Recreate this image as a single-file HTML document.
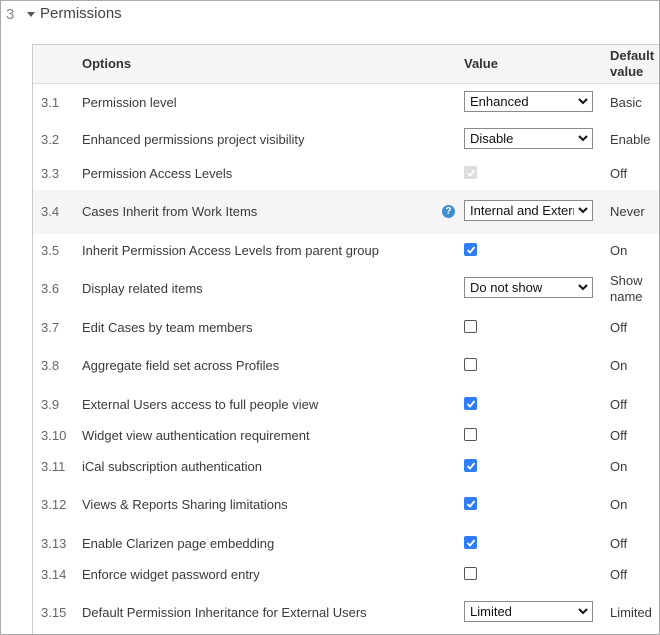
<!DOCTYPE html><html><head><style>
html,body{margin:0;height:635px;overflow:hidden}
body{width:660px;font-family:"Liberation Sans",sans-serif;font-size:13px;color:#3a3a3a;background:#fff;position:relative}
.frame{position:absolute;left:0;top:0;width:658px;height:633px;border:1px solid #aaa;z-index:5;pointer-events:none}
.t{position:absolute;left:32px;top:44px;width:627px;height:590px;border-left:1px solid #ccc;border-top:1px solid #ccc}
.hd{position:absolute;left:33px;top:45px;width:626px;height:38px;background:#f5f5f5;border-bottom:1px solid #ddd}
.a{position:absolute;white-space:nowrap}
.n{color:#666;left:41px}
.o{left:82px}
.d{left:610px}
.sel{position:absolute;left:464px;width:127px;height:19px;border:1px solid #8a8a8a;background:#fff;box-sizing:content-box}
.sel span{position:absolute;left:5px;top:2px;color:#111;white-space:nowrap;overflow:hidden;width:104px}
.sel svg{position:absolute;right:4px;top:6px}
.cb{position:absolute;left:464px;width:11px;height:11px;border:1px solid #555;border-radius:2px;background:#fff}
.cb.on{background:#2f7cf6;border-color:#2f7cf6}
.cb.dis{background:#ddd;border-color:#ddd}
.cb svg{position:absolute;left:1px;top:1px}
</style></head><body>
<div class="frame"></div>
<div class="a" style="left:6px;top:6px;font-size:15px;color:#888">3</div>
<svg class="a" style="left:27px;top:12px" width="8" height="5"><path d="M0 0H8L4 5Z" fill="#555"/></svg>
<div class="a" style="left:40px;top:5px;font-size:15px;color:#444">Permissions</div>
<div class="t"></div><div class="hd"></div>
<div class="a" style="left:33px;top:190px;width:626px;height:44px;background:#f5f5f5"></div>
<div class="a" style="left:82px;top:56px;font-weight:bold;color:#333">Options</div>
<div class="a" style="left:464px;top:56px;font-weight:bold;color:#333">Value</div>
<div class="a" style="left:610px;top:48px;font-weight:bold;color:#333;line-height:16px">Default<br>value</div>

<div class="a n" style="top:95px">3.1</div><div class="a o" style="top:95px">Permission level</div>
<div class="sel" style="top:91px"><span>Enhanced</span><svg width="10" height="7"><path d="M1 1L5 5L9 1" stroke="#111" stroke-width="2" fill="none"/></svg></div>
<div class="a d" style="top:95px">Basic</div>

<div class="a n" style="top:132px">3.2</div><div class="a o" style="top:132px">Enhanced permissions project visibility</div>
<div class="sel" style="top:128px"><span>Disable</span><svg width="10" height="7"><path d="M1 1L5 5L9 1" stroke="#111" stroke-width="2" fill="none"/></svg></div>
<div class="a d" style="top:132px">Enable</div>

<div class="a n" style="top:166px">3.3</div><div class="a o" style="top:166px">Permission Access Levels</div>
<div class="cb dis" style="top:166px"><svg width="10" height="10"><path d="M1.5 5L4 7.5L8.5 2" stroke="#fff" stroke-width="1.8" fill="none"/></svg></div>
<div class="a d" style="top:166px">Off</div>

<div class="a n" style="top:204px">3.4</div><div class="a o" style="top:204px">Cases Inherit from Work Items</div>
<div class="a" style="left:442px;top:205px;width:13px;height:13px;border-radius:50%;background:#3d8fd1;color:#fff;font-size:10px;font-weight:bold;text-align:center;line-height:13px">?</div>
<div class="sel" style="top:200px"><span>Internal and Extern</span><svg width="10" height="7"><path d="M1 1L5 5L9 1" stroke="#111" stroke-width="2" fill="none"/></svg></div>
<div class="a d" style="top:204px">Never</div>

<div class="a n" style="top:243px">3.5</div><div class="a o" style="top:243px">Inherit Permission Access Levels from parent group</div>
<div class="cb on" style="top:243px"><svg width="10" height="10"><path d="M1.5 5L4 7.5L8.5 2" stroke="#fff" stroke-width="1.8" fill="none"/></svg></div>
<div class="a d" style="top:243px">On</div>

<div class="a n" style="top:281px">3.6</div><div class="a o" style="top:281px">Display related items</div>
<div class="sel" style="top:277px"><span>Do not show</span><svg width="10" height="7"><path d="M1 1L5 5L9 1" stroke="#111" stroke-width="2" fill="none"/></svg></div>
<div class="a d" style="top:273px;line-height:16px">Show<br>name</div>

<div class="a n" style="top:320px">3.7</div><div class="a o" style="top:320px">Edit Cases by team members</div>
<div class="cb" style="top:320px"></div><div class="a d" style="top:320px">Off</div>

<div class="a n" style="top:358px">3.8</div><div class="a o" style="top:358px">Aggregate field set across Profiles</div>
<div class="cb" style="top:358px"></div><div class="a d" style="top:358px">On</div>

<div class="a n" style="top:397px">3.9</div><div class="a o" style="top:397px">External Users access to full people view</div>
<div class="cb on" style="top:397px"><svg width="10" height="10"><path d="M1.5 5L4 7.5L8.5 2" stroke="#fff" stroke-width="1.8" fill="none"/></svg></div><div class="a d" style="top:397px">Off</div>

<div class="a n" style="top:428px">3.10</div><div class="a o" style="top:428px">Widget view authentication requirement</div>
<div class="cb" style="top:428px"></div><div class="a d" style="top:428px">Off</div>

<div class="a n" style="top:459px">3.11</div><div class="a o" style="top:459px">iCal subscription authentication</div>
<div class="cb on" style="top:459px"><svg width="10" height="10"><path d="M1.5 5L4 7.5L8.5 2" stroke="#fff" stroke-width="1.8" fill="none"/></svg></div><div class="a d" style="top:459px">On</div>

<div class="a n" style="top:497px">3.12</div><div class="a o" style="top:497px">Views &amp; Reports Sharing limitations</div>
<div class="cb on" style="top:497px"><svg width="10" height="10"><path d="M1.5 5L4 7.5L8.5 2" stroke="#fff" stroke-width="1.8" fill="none"/></svg></div><div class="a d" style="top:497px">On</div>

<div class="a n" style="top:536px">3.13</div><div class="a o" style="top:536px">Enable Clarizen page embedding</div>
<div class="cb on" style="top:536px"><svg width="10" height="10"><path d="M1.5 5L4 7.5L8.5 2" stroke="#fff" stroke-width="1.8" fill="none"/></svg></div><div class="a d" style="top:536px">Off</div>

<div class="a n" style="top:567px">3.14</div><div class="a o" style="top:567px">Enforce widget password entry</div>
<div class="cb" style="top:567px"></div><div class="a d" style="top:567px">Off</div>

<div class="a n" style="top:605px">3.15</div><div class="a o" style="top:605px">Default Permission Inheritance for External Users</div>
<div class="sel" style="top:601px"><span>Limited</span><svg width="10" height="7"><path d="M1 1L5 5L9 1" stroke="#111" stroke-width="2" fill="none"/></svg></div>
<div class="a d" style="top:605px">Limited</div>
</body></html>
